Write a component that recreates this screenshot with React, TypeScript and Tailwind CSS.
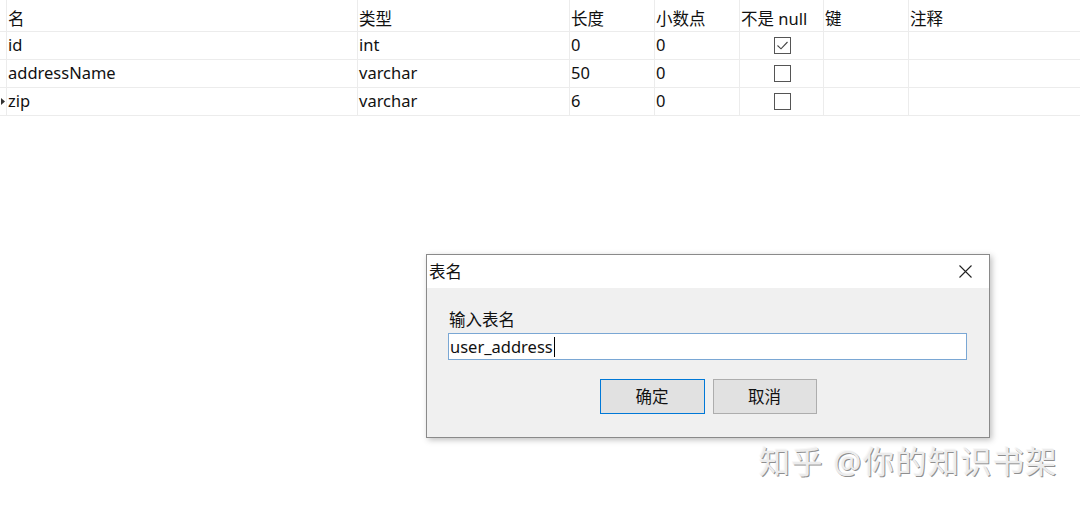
const cols = [
  { key: "name", label: "名", w: "w-[351px]" },
  { key: "type", label: "类型", w: "w-[212px]" },
  { key: "len", label: "长度", w: "w-[85px]" },
  { key: "dec", label: "小数点", w: "w-[85px]" },
  { key: "nn", label: "不是 null", w: "w-[84px]" },
  { key: "key", label: "键", w: "w-[85px]" },
  { key: "note", label: "注释", w: "flex-1" },
];

const rows = [
  { name: "id", type: "int", len: "0", dec: "0", nn: true },
  { name: "addressName", type: "varchar", len: "50", dec: "0", nn: false },
  { name: "zip", type: "varchar", len: "6", dec: "0", nn: false, current: true },
];

const font = { fontFamily: '"Noto Sans", "Noto Sans CJK SC", sans-serif' };

const Checkbox = ({ checked }: { checked: boolean }) => (
  <div className="w-[17px] h-[17px] border border-[#555] bg-white flex items-center justify-center">
    {checked && (
      <svg width="13" height="13" viewBox="0 0 13 13">
        <path d="M1.5 6.5 L5 9.8 L11.5 3" fill="none" stroke="#444" strokeWidth="1.1" />
      </svg>
    )}
  </div>
);

const App = () => {
  return (
    <div className="w-[1080px] h-[505px] bg-white text-[16.5px] text-[#111] overflow-hidden" style={font}>
      <div className="flex">
        <div className="w-[6px] shrink-0">
          <div className="h-[32px] border-b border-[#ececec]" />
          {rows.map((r) => (
            <div key={r.name} className="h-[28px] border-b border-[#ececec] flex items-center">
              {r.current && (
                <svg width="5" height="7" viewBox="0 0 5 7" className="ml-[1px]">
                  <path d="M0 0 L4 3.5 L0 7 Z" fill="#333" />
                </svg>
              )}
            </div>
          ))}
        </div>
        {cols.map((c) => (
          <div key={c.key} className={`${c.w} shrink-0 border-l border-[#ececec]`}>
            <div className="h-[32px] border-b border-[#ececec] flex items-end pb-[1px] pl-[1px] leading-[22px]">
              {c.label}
            </div>
            {rows.map((r) => (
              <div key={r.name} className="h-[28px] border-b border-[#ececec] flex items-center pb-[2px] pl-[1px] leading-[22px]">
                {c.key === "nn" ? (
                  <div className="w-full flex justify-center pt-[2px]">
                    <Checkbox checked={r.nn} />
                  </div>
                ) : c.key === "name" ? (
                  r.name
                ) : c.key === "type" ? (
                  r.type
                ) : c.key === "len" ? (
                  r.len
                ) : c.key === "dec" ? (
                  r.dec
                ) : null}
              </div>
            ))}
          </div>
        ))}
      </div>

      <div className="ml-[426px] mt-[138px] w-[564px] border border-[#8a8a8a] shadow-[2px_2px_6px_rgba(0,0,0,0.25)]">
        <div className="h-[33px] bg-white flex items-center justify-between pl-[2px] pr-[17px]">
          <span className="leading-[22px]">表名</span>
          <svg width="13" height="13" viewBox="0 0 13 13">
            <path d="M0.5 0.5 L12.5 12.5 M12.5 0.5 L0.5 12.5" stroke="#222" strokeWidth="1.1" />
          </svg>
        </div>
        <div className="bg-[#f0f0f0] px-[21px] pt-[21px] pb-[23px]">
          <div className="leading-[22px] h-[24px] pl-[1px]">输入表名</div>
          <div className="h-[27px] w-[519px] border border-[#7aa7d4] bg-white flex items-center pl-[1px] leading-[22px]">
            user_address
            <span className="inline-block w-[1px] h-[20px] bg-black ml-[1px]" />
          </div>
          <div className="flex justify-center gap-[8px] mt-[19px]">
            <button className="w-[105px] h-[35px] bg-[#e1e1e1] border border-[#0078d7] leading-[22px]">确定</button>
            <button className="w-[104px] h-[35px] bg-[#e1e1e1] border border-[#adadad] leading-[22px]">取消</button>
          </div>
        </div>
      </div>

      <div className="ml-[759px] mt-[5px] text-[31px] leading-[36px] tracking-[1.5px] text-[#ececec] [text-shadow:1px_1px_0_#8f8f8f,-1px_-1px_0_#f8f8f8]">
        知乎 @你的知识书架
      </div>
    </div>
  );
};

export default App;
